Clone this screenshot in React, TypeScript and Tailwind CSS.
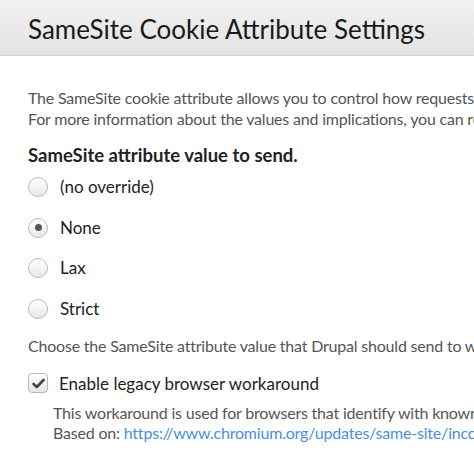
import React from "react";

function Radio({ checked }: { checked?: boolean }) {
  return (
    <span className="flex h-[20px] w-[20px] shrink-0 items-center justify-center rounded-full border border-[#b8b8b8] bg-gradient-to-b from-[#ffffff] to-[#e8e8e8] shadow-[inset_0_1px_1px_rgba(255,255,255,0.8)]">
      {checked && <span className="h-[7px] w-[7px] rounded-full bg-[#555]" />}
    </span>
  );
}

export default function App() {
  const opts = ["(no override)", "None", "Lax", "Strict"];
  return (
    <div className="h-[475px] w-[474px] overflow-hidden bg-white" style={{ fontFamily: "Lato, 'Open Sans', sans-serif" }}>
      <div className="h-[56px] w-full bg-gradient-to-b from-[#f2f2f2] to-[#e2e2e2] border-b border-[#d6d6d6] pl-[28px] flex items-center">
        <h1 className="text-[26px] leading-none text-[#1a1a1a] whitespace-nowrap pt-[3px]">SameSite Cookie Attribute Settings</h1>
      </div>
      <div className="pl-[28px] pt-[31px]">
        <p className="text-[16px] leading-[21px] tracking-[-0.2px] text-[#555] whitespace-nowrap">
          The SameSite cookie attribute allows you to control how requests are sent.
          <br />
          For more information about the values and implications, you can read more.
        </p>
        <div className="mt-[15px] text-[18.5px] font-bold text-[#222] leading-[22px] whitespace-nowrap">SameSite attribute value to send.</div>
        <div className="mt-[11px] flex flex-col gap-[20.5px]">
          {opts.map((o, i) => (
            <label key={o} className="flex items-center gap-[12px] h-[20px]">
              <Radio checked={i === 1} />
              <span className="text-[17px] text-[#222] whitespace-nowrap">{o}</span>
            </label>
          ))}
        </div>
        <p className="mt-[16px] text-[16px] leading-[21px] tracking-[-0.2px] text-[#555] whitespace-nowrap">
          Choose the SameSite attribute value that Drupal should send to web browsers.
        </p>
        <label className="mt-[15px] flex items-center gap-[11px]">
          <span className="flex h-[20px] w-[20px] items-center justify-center rounded-[4px] border border-[#b8b8b8] bg-gradient-to-b from-[#ffffff] to-[#e6e6e6]">
            <svg width="13" height="11" viewBox="0 0 13 11">
              <path d="M1.5 6 L4.8 9 L11.5 2" fill="none" stroke="#444" strokeWidth="2.6" strokeLinecap="round" strokeLinejoin="round" />
            </svg>
          </span>
          <span className="text-[17px] text-[#222] whitespace-nowrap">Enable legacy browser workaround</span>
        </label>
        <p className="mt-[7px] pl-[25px] text-[16px] leading-[20px] tracking-[-0.2px] text-[#555] whitespace-nowrap">
          This workaround is used for browsers that identify with known problems.
          <br />
          Based on: <span className="text-[#4a8fdb]">https://www.chromium.org/updates/same-site/incompatible-clients</span>
        </p>
      </div>
    </div>
  );
}
